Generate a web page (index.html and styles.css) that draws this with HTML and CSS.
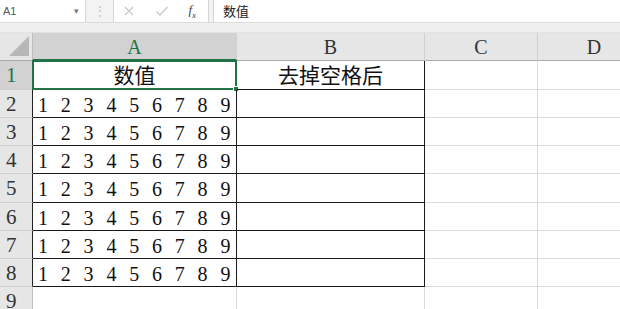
FILE: index.html
```
<!DOCTYPE html>
<html lang="zh-CN">
<head>
  <meta charset="UTF-8">
  <title>去掉空格</title>
  <link rel="stylesheet" href="styles.css">
</head>
<body>
  <div class="formula-bar">
    <div class="name-box">
      <span>A1</span>
      <span class="drop">&#9662;</span>
    </div>
    <div class="grip">&#8942;</div>
    <div class="fx-tools">
      <svg width="12" height="12" viewBox="0 0 12 12"><path d="M2 2 L10 10 M10 2 L2 10" stroke="#c8c8c8" stroke-width="1.3"/></svg>
      <svg width="14" height="12" viewBox="0 0 14 12"><path d="M1.5 6.5 L5 10 L12.5 2" stroke="#c8c8c8" stroke-width="1.4" fill="none"/></svg>
      <span class="fx">f<sub>x</sub></span>
    </div>
    <div class="formula-input">数值</div>
  </div>
  <div class="strip"></div>

  <div class="sheet">
    <div class="corner"><span class="tri"></span></div>
    <div class="col-head sel">A</div>
    <div class="col-head">B</div>
    <div class="col-head">C</div>
    <div class="col-head">D</div>

    <div class="row-head sel t">1</div>
    <div class="cell a t title">数值
      <span class="selection"><span class="handle"></span></span>
    </div>
    <div class="cell b t title">去掉空格后</div>
    <div class="cell"></div>
    <div class="cell"></div>

    <div class="row-head t">2</div>
    <div class="cell a t num">1 2 3 4 5 6 7 8 9</div>
    <div class="cell b t"></div>
    <div class="cell"></div>
    <div class="cell"></div>

    <div class="row-head t">3</div>
    <div class="cell a t num">1 2 3 4 5 6 7 8 9</div>
    <div class="cell b t"></div>
    <div class="cell"></div>
    <div class="cell"></div>

    <div class="row-head t">4</div>
    <div class="cell a t num">1 2 3 4 5 6 7 8 9</div>
    <div class="cell b t"></div>
    <div class="cell"></div>
    <div class="cell"></div>

    <div class="row-head t">5</div>
    <div class="cell a t num">1 2 3 4 5 6 7 8 9</div>
    <div class="cell b t"></div>
    <div class="cell"></div>
    <div class="cell"></div>

    <div class="row-head t">6</div>
    <div class="cell a t num">1 2 3 4 5 6 7 8 9</div>
    <div class="cell b t"></div>
    <div class="cell"></div>
    <div class="cell"></div>

    <div class="row-head t">7</div>
    <div class="cell a t num">1 2 3 4 5 6 7 8 9</div>
    <div class="cell b t"></div>
    <div class="cell"></div>
    <div class="cell"></div>

    <div class="row-head t">8</div>
    <div class="cell a t num">1 2 3 4 5 6 7 8 9</div>
    <div class="cell b t"></div>
    <div class="cell"></div>
    <div class="cell"></div>

    <div class="row-head">9</div>
    <div class="cell"></div>
    <div class="cell"></div>
    <div class="cell"></div>
    <div class="cell"></div>
  </div>
</body>
</html>
```

FILE: styles.css
```
/* Reset */
* {
  margin: 0;
  padding: 0;
  box-sizing: border-box;
}

body {
  width: 620px;
  height: 309px;
  overflow: hidden;
  background: #fff;
  font-family: "Liberation Serif", "Noto Sans CJK SC", serif;
}

/* Formula bar */
.formula-bar {
  display: flex;
  height: 23px;
  background: #f3f3f3;
  border-bottom: 1px solid #dadada;
}

.name-box {
  width: 86px;
  display: flex;
  align-items: center;
  justify-content: space-between;
  padding: 0 6px 0 3px;
  background: #fff;
  border-right: 1px solid #d6d6d6;
  font-family: "Liberation Sans", sans-serif;
  font-size: 11px;
  color: #555;
}

.name-box .drop {
  font-size: 9px;
  color: #777;
}

.grip {
  width: 27px;
  text-align: center;
  line-height: 22px;
  font-size: 12px;
  color: #c0c0c0;
}

.fx-tools {
  width: 96px;
  display: flex;
  align-items: center;
  justify-content: space-between;
  padding: 0 12px 0 9px;
  background: #fff;
  border-left: 1px solid #d6d6d6;
  border-right: 1px solid #d6d6d6;
}

.fx {
  font-family: "Liberation Serif", serif;
  font-style: italic;
  font-size: 13px;
  color: #444;
}

.fx sub {
  font-size: 9px;
}

.formula-input {
  flex: 1;
  margin-left: 4px;
  padding-left: 9px;
  background: #fff;
  border-left: 1px solid #d6d6d6;
  line-height: 22px;
  font-family: "Noto Sans CJK SC", sans-serif;
  font-size: 13px;
  color: #222;
}

.strip {
  height: 10px;
  background: #f0f0f0;
  border-bottom: 1px solid #e2e2e2;
}

/* Sheet grid */
.sheet {
  display: grid;
  grid-template-columns: 33px 204px 188px 113px 113px;
  grid-template-rows: 28px 29px repeat(8, 28.15px);
}

.corner {
  position: relative;
  background: #e6e6e6;
  border-right: 1px solid #bdbdbd;
  border-bottom: 1px solid #ababab;
}

.tri {
  position: absolute;
  right: 3px;
  bottom: 4px;
  width: 0;
  height: 0;
  border-left: 20px solid transparent;
  border-bottom: 20px solid #b7b7b7;
}

.col-head {
  background: #e6e6e6;
  border-right: 1px solid #d0d0d0;
  border-bottom: 1px solid #ababab;
  text-align: center;
  font-size: 20px;
  line-height: 28px;
  color: #333;
}

.col-head.sel {
  background: #d2d2d2;
  color: #217346;
  border-bottom: 2px solid #217346;
}

.row-head {
  background: #e6e6e6;
  border-right: 1px solid #bdbdbd;
  border-bottom: 1px solid #d0d0d0;
  padding-left: 6px;
  font-size: 21px;
  line-height: 29px;
  color: #333;
}

.row-head.sel {
  background: #d2d2d2;
  color: #217346;
}

.row-head.t {
  border-right-color: #222;
}

.cell {
  position: relative;
  border-right: 1px solid #dadada;
  border-bottom: 1px solid #dadada;
}

.cell.t {
  border-right-color: #1a1a1a;
  border-bottom-color: #1a1a1a;
}

.cell.title {
  text-align: center;
  font-family: "Noto Sans CJK SC", sans-serif;
  font-size: 21px;
  line-height: 27px;
  color: #111;
}

.cell.num {
  padding-left: 5px;
  font-size: 20px;
  letter-spacing: 3.9px;
  line-height: 30px;
  white-space: nowrap;
  color: #111;
}

/* Active cell outline */
.selection {
  position: absolute;
  left: -1px;
  top: -1px;
  right: -1px;
  bottom: -1px;
  border: 2px solid #217346;
}

.handle {
  position: absolute;
  right: -4px;
  bottom: -4px;
  width: 6px;
  height: 6px;
  background: #217346;
  border: 1px solid #fff;
}
```
